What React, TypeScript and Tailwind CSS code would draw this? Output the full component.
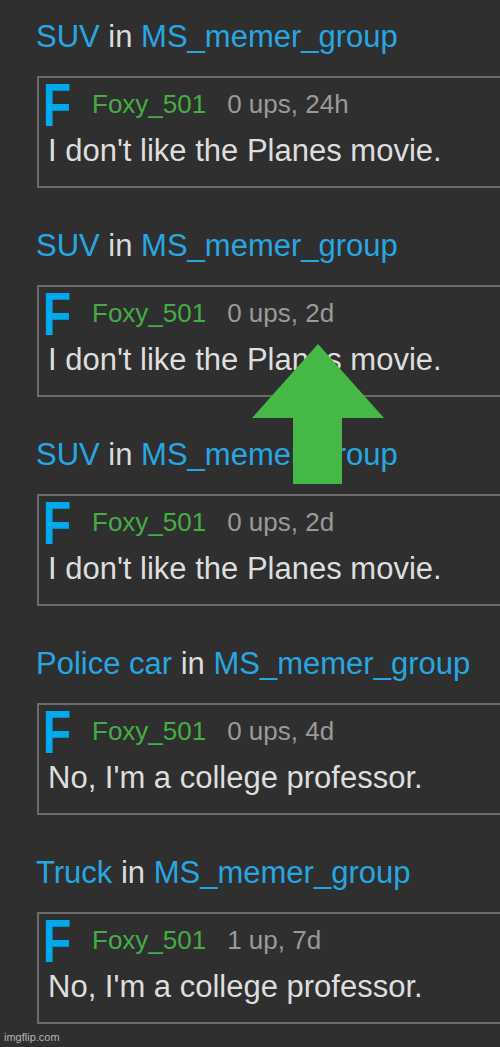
import React from 'react';

interface Post {
    vehicle: string;
    ago: string;
    ups: string;
    text: string;
}

const posts: Post[] = [
    { vehicle: 'SUV', ups: '0 ups', ago: '24h', text: "I don't like the Planes movie." },
    { vehicle: 'SUV', ups: '0 ups', ago: '2d', text: "I don't like the Planes movie." },
    { vehicle: 'SUV', ups: '0 ups', ago: '2d', text: "I don't like the Planes movie." },
    { vehicle: 'Police car', ups: '0 ups', ago: '4d', text: "No, I'm a college professor." },
    { vehicle: 'Truck', ups: '1 up', ago: '7d', text: "No, I'm a college professor." },
];

function CommentBox({ post }: { post: Post }) {
    return (
        <div className="ml-[37px] mr-[-20px] border-2 border-[#6b6b6b] pt-[5px] pb-[18px]">
            <div className="flex items-center h-[43px]">
                <div className="w-[26px] ml-[5px] h-[43px] flex items-center justify-center overflow-visible">
                    <span className="text-[62px] leading-none font-bold text-[#00aaee] scale-x-75 inline-block">F</span>
                </div>
                <span className="ml-[22px] text-[26px] text-[#45ad45]">Foxy_501</span>
                <span className="ml-[21px] text-[26px] text-[#9a9a9a]">
                    {post.ups}, {post.ago}
                </span>
            </div>
            <div className="mt-[7px] ml-[9px] text-[31px] leading-[35px] text-[#dedede] whitespace-nowrap">
                {post.text}
            </div>
        </div>
    );
}

export default function App() {
    return (
        <div
            className="relative w-[500px] h-[1047px] overflow-hidden bg-[#2f2f2f]"
            style={{ fontFamily: '"Liberation Sans", Arial, sans-serif' }}
        >
            <div className="pt-[19px] flex flex-col">
                {posts.map((post, i) => (
                    <div key={i} className="flex flex-col h-[209px]">
                        <div className="ml-[36px] text-[31px] leading-[36px] whitespace-nowrap">
                            <span className="text-[#27a7e2]">{post.vehicle}</span>
                            <span className="text-[#dcdcdc]"> in </span>
                            <span className="text-[#27a7e2]">MS_memer_group</span>
                        </div>
                        <div className="mt-[21px]">
                            <CommentBox post={post} />
                        </div>
                    </div>
                ))}
            </div>

            <svg className="absolute left-0 top-0 pointer-events-none" width="500" height="1047" viewBox="0 0 500 1047">
                <polygon
                    points="318,344 384,418 342,418 342,484 293,484 293,418 252,418"
                    fill="#45b845"
                />
            </svg>

            <div className="absolute left-[4px] bottom-[2px] text-[11px] text-[#b5b5b5]">imgflip.com</div>
        </div>
    );
}
